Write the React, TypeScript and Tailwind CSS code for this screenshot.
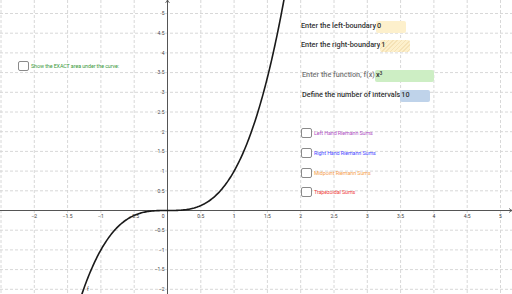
import React from "react";

const X0 = 167.5;
const Y0 = 210.5;
const UX = 66.6;
const UY = 39.4;

const px = (x: number) => X0 + UX * x;
const py = (y: number) => Y0 - UY * y;

function curvePath() {
  const pts: string[] = [];
  for (let i = 0; i <= 200; i++) {
    const x = -1.32 + (3.1 * i) / 200;
    pts.push(`${i === 0 ? "M" : "L"}${px(x).toFixed(2)},${py(x * x * x).toFixed(2)}`);
  }
  return pts.join(" ");
}

const fmt = (v: number) => (Number.isInteger(v) ? String(v) : v.toFixed(1)).replace("-", "\u2212");

// graph paper: grid, axes, labels and f(x) = x³
function Graph() {
  const xs: number[] = [];
  for (let k = -10; k <= 10; k++) xs.push(k * 0.5);
  const ys: number[] = [];
  for (let k = -6; k <= 12; k++) ys.push(k * 0.5);
  return (
    <svg width={512} height={294} className="absolute inset-0 font-[Roboto,sans-serif]">
      {xs.map((v) => (
        <line key={"gx" + v} x1={px(v)} x2={px(v)} y1={0} y2={294} stroke="#d8d8d8" strokeWidth={1} strokeDasharray="3 2" />
      ))}
      {ys.map((v) => (
        <line key={"gy" + v} x1={0} x2={512} y1={py(v)} y2={py(v)} stroke="#d8d8d8" strokeWidth={1} strokeDasharray="3 2" />
      ))}
      <line x1={0} x2={512} y1={Y0} y2={Y0} stroke="#555" strokeWidth={1} />
      <line x1={X0} x2={X0} y1={0} y2={294} stroke="#555" strokeWidth={1} />
      <path d={`M${X0 - 2},3 L${X0},0 L${X0 + 2},3`} fill="none" stroke="#555" strokeWidth={0.8} />
      <path d={`M509,${Y0 - 2} L512,${Y0} L509,${Y0 + 2}`} fill="none" stroke="#555" strokeWidth={0.8} />
      {xs
        .filter((v) => v !== 0 && px(v) > 5 && px(v) < 508)
        .map((v) => (
          <text key={"lx" + v} x={px(v)} y={Y0 + 7.5} fontSize={5} fill="#444" textAnchor="middle">
            {fmt(v)}
          </text>
        ))}
      <text x={X0 - 3} y={Y0 + 7.5} fontSize={5} fill="#444" textAnchor="end">
        0
      </text>
      {ys
        .filter((v) => v !== 0 && py(v) > 4 && py(v) < 292)
        .map((v) => (
          <text key={"ly" + v} x={X0 - 3} y={py(v) + 1.8} fontSize={5} fill="#444" textAnchor="end">
            {fmt(v)}
          </text>
        ))}
      <path d={curvePath()} fill="none" stroke="#1a1a1a" strokeWidth={1.6} />
      <text x={87} y={291} fontSize={5} fill="#333">
        f
      </text>
    </svg>
  );
}

function Check({ labelClass, label }: { labelClass: string; label: string }) {
  return (
    <div className="flex items-center gap-[2px]">
      <div className="h-[10px] w-[11px] rounded-[2px] border border-[#8a8a8a] bg-white" />
      <span className={`whitespace-nowrap text-[5.4px] tracking-[-0.1px] ${labelClass}`}>{label}</span>
    </div>
  );
}

function Field({
  label,
  labelClass = "text-[#333]",
  value,
  boxClass,
}: {
  label: React.ReactNode;
  labelClass?: string;
  value: React.ReactNode;
  boxClass: string;
}) {
  return (
    <div className="flex items-center">
      <span className={`whitespace-nowrap text-[7.3px] font-medium ${labelClass}`}>{label}</span>
      <div className={`flex h-[12px] items-center rounded-[2px] pl-[1px] text-[7.3px] font-medium text-[#333] ${boxClass}`}>
        {value}
      </div>
    </div>
  );
}

export default function App() {
  return (
    <div className="relative h-[294px] w-[512px] overflow-hidden bg-white font-[Roboto,'Liberation_Sans',sans-serif]">
      <Graph />

      {/* GeoGebra widgets sit on the canvas */}
      <div className="absolute left-[18px] top-[61px]">
        <Check labelClass="text-[#3a9a3a]" label="Show the EXACT area under the curve:" />
      </div>

      <div className="absolute left-[301px] top-[20.5px] flex flex-col">
        <div className="flex flex-col gap-[7px]">
          <Field label="Enter the left-boundary" value="0" boxClass="w-[30px] bg-[#fdf0cc]" />
          <Field
            label="Enter the right-boundary"
            value="1"
            boxClass="w-[30px] bg-[#fdf0cc] bg-[repeating-linear-gradient(135deg,rgba(230,200,140,0.35)_0_1px,transparent_1px_3px)]"
          />
        </div>
        <div className="ml-[1px] mt-[18px] flex flex-col gap-[8px]">
          <Field
            label="Enter the function, f(x)"
            labelClass="text-[#777]"
            value={
              <span>
                x<sup className="text-[5px]">3</sup>
              </span>
            }
            boxClass="w-[59px] bg-[#cdeec4]"
          />
          <Field label="Define the number of intervals" value="10" boxClass="w-[30px] bg-[#bfd3ea]" />
        </div>
        <div className="mt-[26.5px] flex flex-col gap-[9.8px]">
          <Check labelClass="text-[#b04fc4]" label="Left Hand Riemann Sums" />
          <Check labelClass="text-[#4a4aff]" label="Right Hand Riemann Sums" />
          <Check labelClass="text-[#f5a050]" label="Midpoint Riemann Sums" />
          <Check labelClass="text-[#f04444]" label="Trapezoidal Sums" />
        </div>
      </div>
    </div>
  );
}
